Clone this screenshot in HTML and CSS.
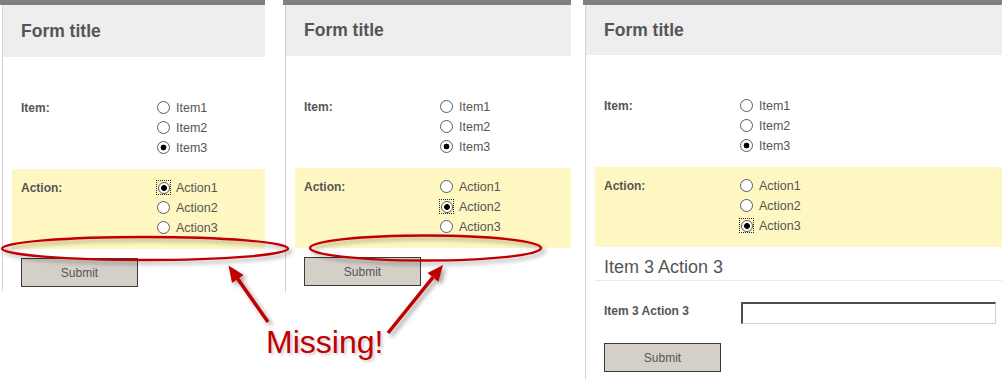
FILE: index.html
```html
<!DOCTYPE html>
<html>
<head>
<meta charset="utf-8">
<title>Form title</title>
<link rel="stylesheet" href="styles.css">
</head>
<body>
<div class="page">
  <div class="panel p1">
    <div class="sheet">
      <div class="topbar"></div>
      <div class="frame">
        <div class="header"><h1 class="title">Form title</h1></div>
        <div class="body">
          <div class="row">
            <div class="label">Item:</div>
            <div class="options">
              <label class="opt"><span class="rb"><input type="radio" name="a-item"></span>Item1</label>
              <label class="opt"><span class="rb"><input type="radio" name="a-item"></span>Item2</label>
              <label class="opt"><span class="rb"><input type="radio" name="a-item" checked></span>Item3</label>
            </div>
          </div>
          <div class="row action">
            <div class="label">Action:</div>
            <div class="options">
              <label class="opt"><span class="rb focus"><input type="radio" name="a-act" checked></span>Action1</label>
              <label class="opt"><span class="rb"><input type="radio" name="a-act"></span>Action2</label>
              <label class="opt"><span class="rb"><input type="radio" name="a-act"></span>Action3</label>
            </div>
          </div>
          <button class="submit" type="button">Submit</button>
        </div>
      </div>
    </div>
  </div>

  <div class="panel p2">
    <div class="sheet">
      <div class="topbar"></div>
      <div class="frame">
        <div class="header"><h1 class="title">Form title</h1></div>
        <div class="body">
          <div class="row">
            <div class="label">Item:</div>
            <div class="options">
              <label class="opt"><span class="rb"><input type="radio" name="b-item"></span>Item1</label>
              <label class="opt"><span class="rb"><input type="radio" name="b-item"></span>Item2</label>
              <label class="opt"><span class="rb"><input type="radio" name="b-item" checked></span>Item3</label>
            </div>
          </div>
          <div class="row action">
            <div class="label">Action:</div>
            <div class="options">
              <label class="opt"><span class="rb"><input type="radio" name="b-act"></span>Action1</label>
              <label class="opt"><span class="rb focus"><input type="radio" name="b-act" checked></span>Action2</label>
              <label class="opt"><span class="rb"><input type="radio" name="b-act"></span>Action3</label>
            </div>
          </div>
          <button class="submit" type="button">Submit</button>
        </div>
      </div>
    </div>
  </div>

  <div class="panel p3">
    <div class="sheet">
      <div class="topbar"></div>
      <div class="frame">
        <div class="header"><h1 class="title">Form title</h1></div>
        <div class="body">
          <div class="row">
            <div class="label">Item:</div>
            <div class="options">
              <label class="opt"><span class="rb"><input type="radio" name="c-item"></span>Item1</label>
              <label class="opt"><span class="rb"><input type="radio" name="c-item"></span>Item2</label>
              <label class="opt"><span class="rb"><input type="radio" name="c-item" checked></span>Item3</label>
            </div>
          </div>
          <div class="row action">
            <div class="label">Action:</div>
            <div class="options">
              <label class="opt"><span class="rb"><input type="radio" name="c-act"></span>Action1</label>
              <label class="opt"><span class="rb"><input type="radio" name="c-act"></span>Action2</label>
              <label class="opt"><span class="rb focus"><input type="radio" name="c-act" checked></span>Action3</label>
            </div>
          </div>
          <h2 class="subhead">Item 3 Action 3</h2>
          <div class="field">
            <label class="flabel" for="f1">Item 3 Action 3</label>
            <input class="text" id="f1" type="text">
          </div>
          <button class="submit" type="button">Submit</button>
        </div>
      </div>
    </div>
  </div>

  <svg class="annot" width="1002" height="379" viewBox="0 0 1002 379" xmlns="http://www.w3.org/2000/svg">
    <defs>
      <filter id="sh" filterUnits="userSpaceOnUse" x="0" y="0" width="1002" height="379">
        <feDropShadow dx="3" dy="3" stdDeviation="2" flood-color="#000" flood-opacity="0.35"/>
      </filter>
    </defs>
    <g filter="url(#sh)" fill="none" stroke="#c00000" stroke-width="2.4">
      <ellipse cx="145" cy="248.5" rx="143" ry="11.5"/>
      <ellipse cx="425.5" cy="248" rx="115.5" ry="12.5"/>
    </g>
    <g filter="url(#sh)">
      <line x1="268" y1="322" x2="237.5" y2="278.5" stroke="#c00000" stroke-width="3.5"/>
      <polygon points="228.5,265.5 243.5,275 232,283" fill="#c00000"/>
      <line x1="388" y1="333" x2="432.9" y2="277.4" stroke="#c00000" stroke-width="3.5"/>
      <polygon points="443,265 438.4,281.8 427.5,273" fill="#c00000"/>
    </g>
  </svg>
  <div class="missing">Missing!</div>
</div>
</body>
</html>
```
FILE: styles.css
```css
* { box-sizing: border-box; }
html, body { margin: 0; padding: 0; background: #fff; }
body { font-family: "Liberation Sans", Arial, sans-serif; color: #555; }

.page {
  position: relative;
  display: flex;
  width: 1002px;
  height: 379px;
  overflow: hidden;
}

.panel { display: flex; flex-direction: column; height: 379px; }
.p1 { width: 283px; }
.p2 { width: 300px; }
.p3 { width: 419px; }

.sheet { display: flex; flex-direction: column; }
.p1 .sheet { width: 265px; }
.p2 .sheet { width: 288px; }
.p3 .sheet { width: 419px; flex: 1; }

.topbar { height: 5px; background: #808080; }

.frame {
  margin-left: 2px;
  border-left: 1px solid #d2d2d2;
  padding-bottom: 4px;
  display: flex;
  flex-direction: column;
}
.p2 .frame { padding-bottom: 6px; }
.p3 .frame { flex: 1; }

.header {
  height: 52px;
  background: #eeeeee;
  display: flex;
  align-items: center;
  padding-left: 18px;
}
.p2 .header { height: 51px; }
.p3 .header { height: 50px; }

.title {
  margin: 0;
  font-size: 17.5px;
  font-weight: bold;
  color: #555;
}

.body { padding-top: 41px; display: flex; flex-direction: column; align-items: flex-start; }

.row {
  align-self: stretch;
  display: grid;
  grid-template-columns: 136px 1fr;
  margin-left: 9px;
  padding-left: 9px;
}
.row.action {
  margin-top: 11px;
  padding-top: 9px;
  padding-bottom: 11px;
  background: #fff7c1;
}

.label {
  font-size: 12px;
  font-weight: bold;
  line-height: 20px;
  color: #555;
}

.options { display: flex; flex-direction: column; }

.opt {
  display: flex;
  align-items: center;
  height: 20px;
  font-size: 12.5px;
  color: #555;
}

.rb {
  display: flex;
  align-items: center;
  justify-content: center;
  width: 13px;
  height: 13px;
  margin: -1px 6px 0 0;
  flex: none;
}
.rb.focus {
  outline: 1px dotted #222;
  outline-offset: 0;
}

.rb input {
  appearance: none;
  -webkit-appearance: none;
  width: 13px;
  height: 13px;
  margin: 0;
  border: 1px solid #5a5a5a;
  border-radius: 50%;
  background: #fff;
}
.rb.focus input { width: 12px; height: 12px; }
.rb input:checked {
  background: radial-gradient(circle, #000 0, #000 2.6px, #fff 3.2px);
}

.submit {
  margin: 9px 0 0 18px;
  width: 117px;
  height: 29px;
  background: #d4d0c8;
  border: 1px solid #3a3a3a;
  border-radius: 0;
  font-family: "Liberation Sans", Arial, sans-serif;
  font-size: 12px;
  color: #555;
  padding: 0;
}

.subhead {
  align-self: stretch;
  margin: 8px 0 0 9px;
  padding: 0 0 1px 9px;
  font-size: 18px;
  font-weight: normal;
  line-height: 24px;
  color: #555;
  border-bottom: 1px dotted #d6d6d6;
}

.field {
  display: grid;
  grid-template-columns: 137px 255px;
  margin: 21px 0 0 18px;
}
.flabel {
  font-size: 12px;
  font-weight: bold;
  line-height: 16px;
  padding-top: 1px;
  color: #555;
}
.text {
  width: 255px;
  height: 22px;
  margin: 0;
  border-top: 2px solid #505050;
  border-left: 2px solid #505050;
  border-right: 1px solid #d4d0c8;
  border-bottom: 1px solid #d4d0c8;
  background: #fff;
}
.p3 .submit { margin-top: 19px; }

.annot {
  position: absolute;
  left: 0;
  top: 0;
  pointer-events: none;
}

.missing {
  position: absolute;
  left: 266px;
  top: 326px;
  font-family: "Liberation Sans", Arial, sans-serif;
  font-size: 32px;
  line-height: 32px;
  color: #c00000;
  text-shadow: 2px 2px 3px rgba(0,0,0,0.2);
  white-space: nowrap;
}
```
